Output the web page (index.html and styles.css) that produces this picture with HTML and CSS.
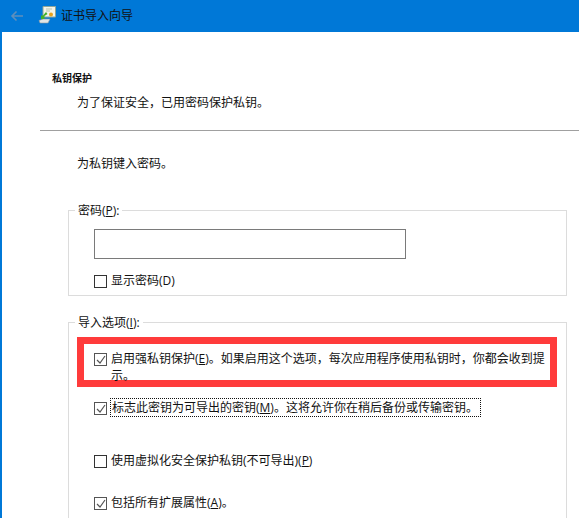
FILE: index.html
```html
<!DOCTYPE html>
<html lang="zh-CN">
<head>
<meta charset="utf-8">
<title>证书导入向导</title>
<link rel="stylesheet" href="styles.css">
</head>
<body>
<div class="window">
  <header class="titlebar">
    <svg class="back" width="14" height="12" viewBox="0 0 14 12"><path d="M13 6H2M6.500 1.500 2 6l4.500 4.500" fill="none" stroke="#5f8fbc" stroke-width="1.600"/></svg>
    <svg class="appicon" width="18" height="18" viewBox="0 0 18 18">
      <path d="M5 0.500h12.500v10.500H5z" fill="#f4f4e8" stroke="#8fa69a"/>
      <path d="M8 3h6M8 5h4" stroke="#b9c4b0"/>
      <circle cx="13" cy="8.500" r="2" fill="#e8a21c"/>
      <path d="M1 14.500 5 13h7l-2 4H2z" fill="#dfe5e6" stroke="#8d979c" stroke-width=".6"/>
      <path d="M8 6 5 9.500H3V13h3.500V10l3-2z" fill="#43b02a"/>
    </svg>
    <span class="title">证书导入向导</span>
  </header>
  <main class="content">
    <h1 class="heading">私钥保护</h1>
    <p class="sub">为了保证安全，已用密码保护私钥。</p>
    <hr class="divider">
    <p class="prompt">为私钥键入密码。</p>
    <fieldset class="group group-pw">
      <legend>密码(<u>P</u>):</legend>
      <div class="textbox"></div>
      <div class="option opt-show"><span class="check"></span><span>显示密码(D)</span></div>
    </fieldset>
    <fieldset class="group group-import">
      <legend>导入选项(<u>I</u>):</legend>
      <div class="highlight">
        <div class="option opt-strong">
          <span class="check on"><svg width="10" height="10" viewBox="0 0 10 10"><path d="M1 5l3 3 5-7" fill="none" stroke="#555" stroke-width="1.200"/></svg></span>
          <span>启用强私钥保护(<u>E</u>)。如果启用这个选项，每次应用程序使用私钥时，你都会收到提示。</span>
        </div>
      </div>
      <div class="option opt-export">
        <span class="check on"><svg width="10" height="10" viewBox="0 0 10 10"><path d="M1 5l3 3 5-7" fill="none" stroke="#555" stroke-width="1.200"/></svg></span>
        <span class="focus">标志此密钥为可导出的密钥(<u>M</u>)。这将允许你在稍后备份或传输密钥。</span>
      </div>
      <div class="option opt-vbs"><span class="check"></span><span>使用虚拟化安全保护私钥(不可导出)(<u>P</u>)</span></div>
      <div class="option opt-all">
        <span class="check on"><svg width="10" height="10" viewBox="0 0 10 10"><path d="M1 5l3 3 5-7" fill="none" stroke="#555" stroke-width="1.200"/></svg></span>
        <span>包括所有扩展属性(<u>A</u>)。</span>
      </div>
    </fieldset>
  </main>
</div>
</body>
</html>
```
FILE: styles.css
```css
* { box-sizing: border-box; }
html, body { margin: 0; padding: 0; height: 518px; overflow: hidden; background: #fff; }
body { font-family: "Open Sans", "Noto Sans CJK SC", sans-serif; font-size: 12px; line-height: 17px; color: #111; }
.window { width: 579px; height: 518px; overflow: hidden; border-left: 2px solid #0078d7; }
.titlebar { height: 32px; margin-left: -2px; background: #0078d7; display: flex; align-items: center; padding-left: 10px; }
.back { flex: none; margin-top: -1px; }
.appicon { flex: none; margin-left: 14px; margin-top: -2px; }
.title { margin-left: 5px; font-size: 12px; color: #111; margin-top: -2px; }
.content { display: flow-root; }
.heading { margin: 37px 0 0 50px; font-size: 10px; line-height: 18px; font-weight: 700; color: #111; }
.sub { margin: 7px 0 0 75px; }
.divider { margin: 19px 0 0 38px; border: 0; height: 1px; background: #a0a0a0; }
.prompt { margin: 24px 0 0 75px; }
.group { margin: 0 0 0 66px; width: 499px; border: 1px solid #dcdcdc; padding: 0; min-width: 0; }
.group legend { margin-left: 6px; padding: 0 3px; line-height: 17px; }
.group-pw { margin-top: 30px; height: 94px; }
.group-import { margin-top: 18px; height: 300px; }
.textbox { margin: 10px 0 0 25px; width: 312px; height: 30px; border: 1px solid #7a7a7a; background: #fff; }
.option { display: flex; align-items: flex-start; gap: 4px; }
.check { flex: none; width: 13px; height: 13px; border: 1px solid #333; background: #fff; display: flex; align-items: center; justify-content: center; margin-top: 3px; }
.check.on { border-color: #555; }
.opt-show { margin: 13px 0 0 25px; }
.highlight { margin: 6px 0 0 8px; width: 480px; height: 50px; border: 7px solid #ff3b3b; }
.opt-strong { margin: 6px 0 0 10px; width: 452px; }
.opt-export { margin: 12px 0 0 25px; }
.focus { outline: 1px dotted #111; outline-offset: 0; padding: 0 1px; width: 369px; }
.opt-vbs { margin: 36px 0 0 25px; }
.opt-all { margin: 25px 0 0 25px; }
u { text-underline-offset: 1px; }
```
